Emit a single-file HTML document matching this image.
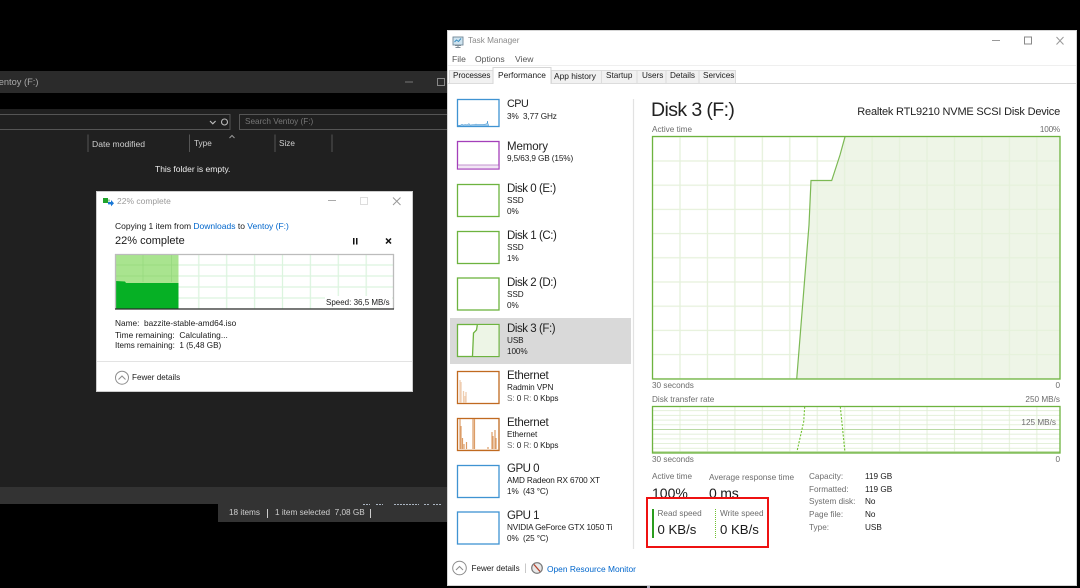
<!DOCTYPE html>
<html><head><meta charset="utf-8"><title>Task Manager</title>
<style>
html,body{margin:0;padding:0;background:#000;width:1080px;height:588px;overflow:hidden}
body{position:relative;font-family:"Liberation Sans",sans-serif;font-size:8.2px;color:#1a1a1a}
.a{position:absolute}
.t{position:absolute;white-space:nowrap;line-height:12px}
svg{position:absolute;left:0;top:0}
.g{color:#6d6d6d}
.d{color:#cfcfcf}
.b{color:#0066cc}
.h{font-size:11.5px;line-height:14px;color:#222;letter-spacing:-.2px}
.s{font-size:8.2px;letter-spacing:-.1px;left:507px}
.l{font-size:8.2px}
.tab{font-size:8.2px;top:70px}
</style></head><body>
<svg width="1080" height="588" viewBox="0 0 1080 588">
<defs>
<pattern id="g1" patternUnits="userSpaceOnUse" x="679" y="160" width="27.45" height="24.2"><path d="M1 0V24.2M0 1H27.45" fill="none" stroke="#e5f1db" stroke-width="1.3"/></pattern>
<pattern id="g2" patternUnits="userSpaceOnUse" x="679" y="409.700" width="27.45" height="4.7"><path d="M1 0V4.7" fill="none" stroke="#e8f2df" stroke-width="1.200"/><path d="M0 1H27.45" fill="none" stroke="#deedd2" stroke-width=".9"/></pattern>
<pattern id="g3" patternUnits="userSpaceOnUse" x="142" y="264" width="27.9" height="11"><path d="M1 0V11M0 1H27.9" fill="none" stroke="#dcf4df" stroke-width="1.3"/></pattern>
</defs>
<!-- explorer -->
<rect x="0" y="71" width="447" height="22" fill="#2b2b2b"/>
<rect x="0" y="93" width="447" height="16" fill="#000"/>
<rect x="0" y="109" width="447" height="379" fill="#202020"/>
<rect x="0" y="487" width="447" height="17" fill="#333"/>
<rect x="218" y="504" width="229" height="18" fill="#333"/>
<path d="M405 82H413" stroke="#777" stroke-width="1"/>
<rect x="437.500" y="78.500" width="7" height="7" fill="none" stroke="#888"/>
<path d="M0 114.500H230V129.500H0M447 114.500H239.500V129.500H447" fill="none" stroke="#555"/>
<path d="M210 121l2.800 2.800 2.800-2.800" fill="none" stroke="#bbb" stroke-width="1.200"/>
<circle cx="224.500" cy="122" r="3" fill="none" stroke="#bbb" stroke-width="1.100"/>
<path d="M88 134.500V152M189.500 134.500V152M275 134.500V152M332 134.500V152" stroke="#555"/>
<path d="M229.500 138l2.500-2.500 2.500 2.500" fill="none" stroke="#999"/>
<path d="M267.500 509v9M370.500 509v9" stroke="#ccc"/>
<path d="M363 504.500H370M376 504.500H383M394 504.500H419M424 504.500H430M433 504.500H441" stroke="#aab4c0" stroke-width="1" stroke-dasharray="2 1"/>
<!-- copy dialog -->
<rect x="96" y="191" width="317" height="201" fill="#fff"/>
<rect x="96.500" y="191.500" width="316" height="200" fill="none" stroke="#9a9a9a" stroke-opacity=".5"/>
<rect x="103" y="198" width="5" height="5" fill="#1fa32a"/><rect x="108" y="199.500" width="2" height="2" fill="#9ccf9e"/>
<path d="M108 202h3v-2l3 3.200-3 3.200v-2h-3z" fill="#1a78d6"/>
<path d="M328 200.500H336" stroke="#aaa"/>
<rect x="360.500" y="197.500" width="7" height="7" fill="none" stroke="#ddd"/>
<path d="M393 197.500L400.500 205M400.500 197.500L393 205" stroke="#999" stroke-width="1"/>
<rect x="353" y="238" width="1.500" height="6.500" fill="#111"/><rect x="356" y="238" width="1.500" height="6.500" fill="#111"/>
<path d="M386 238.500L391 243.500M391 238.500L386 243.500" stroke="#111" stroke-width="1.500"/>
<rect x="115" y="254" width="279" height="55" fill="url(#g3)"/>
<rect x="115.500" y="254" width="63" height="55" fill="#a9e48f"/>
<path d="M143 254V282M171.500 254V282M115.500 265H178M115.500 276H178" stroke="#97d97f" stroke-width=".8"/>
<path d="M116 281L125 281.500L126 283L178.500 283V308.500H116z" fill="#06b025"/>
<rect x="325" y="296" width="67" height="12" fill="#fff"/>
<path d="M115 254.500H394M115.500 254V309M393.500 254V309" stroke="#bcbcbc" stroke-width="1.300" fill="none"/>
<path d="M115 309H394" stroke="#2a2a2a" stroke-width="1.200"/>
<path d="M97 361.500H412" stroke="#e3e3e3"/>
<circle cx="122" cy="377.700" r="6.500" fill="none" stroke="#8c8c8c"/>
<path d="M118.500 379.500L122 376L125.500 379.500" fill="none" stroke="#8c8c8c"/>
<!-- task manager -->
<rect x="447" y="30" width="630" height="556" fill="#fff"/>
<rect x="447.500" y="30.500" width="629" height="555" fill="none" stroke="#d5d5d5"/>
<path d="M448 65.500H1076" stroke="#efefef"/>
<rect x="453" y="37" width="10" height="8" fill="#cfe3ef" stroke="#6f8796" stroke-width=".9"/>
<path d="M454.500 42l2-2 2 1.500 2.500-3" fill="none" stroke="#3a8fc2"/>
<path d="M455 45.500H461M458 45V47.500M455.500 47.500H460.500" stroke="#7e8b94"/>
<path d="M992 40.500H1000" stroke="#999"/>
<rect x="1024.500" y="37" width="7" height="7" fill="none" stroke="#888"/>
<path d="M1056.500 37L1063.500 44.500M1063.500 37L1056.500 44.500" stroke="#999"/>
<!-- tabs -->
<path d="M448 83.500H1076" stroke="#d9d9d9"/>
<rect x="449.500" y="70.500" width="43.500" height="13" fill="#f1f1f1" stroke="#dcdcdc"/>
<rect x="551.500" y="70.500" width="50" height="13" fill="#f1f1f1" stroke="#dcdcdc"/>
<rect x="601.500" y="70.500" width="35.500" height="13" fill="#f1f1f1" stroke="#dcdcdc"/>
<rect x="637" y="70.500" width="29" height="13" fill="#f1f1f1" stroke="#dcdcdc"/>
<rect x="666" y="70.500" width="33" height="13" fill="#f1f1f1" stroke="#dcdcdc"/>
<rect x="699" y="70.500" width="36.500" height="13" fill="#f1f1f1" stroke="#dcdcdc"/>
<path d="M493 84V67.500H551V84" fill="#fff" stroke="#d6d6d6"/>
<rect x="493.500" y="82" width="57" height="3" fill="#fff"/>
<!-- sidebar -->
<rect x="450" y="318" width="181" height="46" fill="#d9d9d9"/>
<path d="M633.500 99V549" stroke="#e2e2e2" stroke-width="1.200"/>
<g fill="#fff" stroke-width="1.300">
<rect x="457.500" y="99.500" width="41.500" height="27" fill="#fff" stroke="#3f93d2"/>
<path d="M458 125.500l3-.5 1-1 1 1 3-.5 1 .5 2-1.500 1 1.500 5-.5 1-.5 1 .5 6 0 3-.5 1-.5.500-2.500.500 3 .5.500V126H458z" fill="#a9cfeb" stroke="#3f93d2" stroke-width=".5"/>
<rect x="457.500" y="141.500" width="41.500" height="27.500" fill="#fff" stroke="#a33fba"/>
<rect x="458" y="165.500" width="40.500" height="3" fill="#f1e6f4"/><path d="M458 165H498.500" stroke="#b06fc1" stroke-width=".8"/>
<rect x="457.500" y="184.500" width="41.500" height="32" stroke="#6db33f"/>
<rect x="457.500" y="231.500" width="41.500" height="32" stroke="#6db33f"/>
<rect x="457.500" y="278" width="41.500" height="32" stroke="#6db33f"/>
<rect x="457.500" y="324.500" width="41.500" height="32" stroke="#6db33f"/>
<path d="M472.500 356L473.500 333L476.500 330L477.300 325H498.500V356z" fill="#edf5e6" stroke="none"/>
<path d="M472.500 356L473.500 333L476.500 330L477.300 325" fill="none" stroke="#6db33f"/>
<rect x="457.500" y="371.500" width="41.500" height="32" stroke="#c06a20"/>
<path d="M460 403V380M461 403V382M463.500 403V391M466 403V392M465 403V396" stroke="#efcdb0" stroke-width="1.300" fill="none"/>
<rect x="457.500" y="418.500" width="41.500" height="32" stroke="#c06a20"/>
<path d="M460 450V419M461 450V426M462.500 450V438M464 450V444M466.500 450V442M473 450V419M474.500 450V419M488 450V447M492 450V432M493 450V436M495 450V430M496 450V438" stroke="#dc9c66" stroke-width="1.200" fill="none"/>
<path d="M458 449.500H498" stroke="#efd4bc" stroke-width="1"/>
<rect x="457.500" y="465.500" width="41.500" height="32" stroke="#3f93d2"/>
<rect x="457.500" y="512" width="41.500" height="32" stroke="#3f93d2"/>
</g>
<!-- active-time graph -->
<rect x="652.500" y="136.500" width="407.500" height="242.500" fill="#fff"/>
<path d="M796.700 379L809 225L811 180.500H831.700L840 155L845 136.800H1060V379z" fill="#eef5e7"/>
<rect x="652.500" y="136.500" width="407.500" height="242.500" fill="url(#g1)"/>
<path d="M796.700 379L809 225L811 180.500H831.700L840 155L845 136.800" fill="none" stroke="#7cb954" stroke-width="1.200"/>
<rect x="652.500" y="136.500" width="407.500" height="242.500" fill="none" stroke="#6db33f" stroke-width="1.300"/>
<!-- transfer graph -->
<rect x="652.500" y="406.500" width="407.500" height="46.500" fill="url(#g2)"/>
<path d="M653 429.500H1060" stroke="#b9d9a4"/>
<path d="M804.700 406.700L803.700 421.700L796.700 452.700M840.300 406.700L845 452.700" fill="none" stroke="#6fc12f" stroke-width="1.100" stroke-dasharray="2 1.500"/>
<path d="M653 452H1060" stroke="#b5d99b" stroke-width="1.500"/>
<rect x="652.500" y="406.500" width="407.500" height="46.500" fill="none" stroke="#6db33f" stroke-width="1.300"/>
<!-- bottom footer -->
<circle cx="459.500" cy="568" r="6.800" fill="none" stroke="#8c8c8c"/>
<path d="M456 570L459.500 566.500L463 570" fill="none" stroke="#8c8c8c"/>
<path d="M525.500 563.500V573" stroke="#c8c8c8"/>
<circle cx="537" cy="568" r="5.300" fill="#e8e8e8" stroke="#777" stroke-width="1.200"/>
<path d="M534 564.500L540 571.500" stroke="#b5402a" stroke-width="1.300"/>
<rect x="647" y="586" width="3" height="2" fill="#aab"/>
</svg>

<!-- explorer text -->
<div class="t" style="left:-7px;top:76px;color:#aaa;font-size:9.300px">Ventoy (F:)</div>
<div class="t" style="left:245px;top:116px;color:#777;font-size:8.200px">Search Ventoy (F:)</div>
<div class="t d" style="left:92px;top:137.500px;font-size:8.600px">Date modified</div>
<div class="t d" style="left:194px;top:137.500px;font-size:8.200px">Type</div>
<div class="t d" style="left:279px;top:137.500px;font-size:8.200px">Size</div>
<div class="t" style="left:155px;top:162.500px;color:#eee;font-size:8.500px">This folder is empty.</div>
<div class="t d" style="left:229px;top:507px;font-size:8.200px">18 items</div>
<div class="t d" style="left:275px;top:507px;font-size:8.200px">1 item selected&nbsp; 7,08 GB</div>

<!-- copy dialog text -->
<div class="t" style="left:117px;top:195px;color:#9a9a9a;font-size:8.500px">22% complete</div>
<div class="t" style="left:115px;top:220px;font-size:8.500px">Copying 1 item from <span class="b">Downloads</span> to <span class="b">Ventoy (F:)</span></div>
<div class="t" style="left:115px;top:234px;font-size:11px;line-height:14px">22% complete</div>
<div class="t" style="left:326px;top:296.500px;font-size:8px">Speed: 36,5 MB/s</div>
<div class="t" style="left:115px;top:317px;font-size:8.300px">Name:&nbsp; bazzite-stable-amd64.iso</div>
<div class="t" style="left:115px;top:328.500px;font-size:8.400px">Time remaining:&nbsp; Calculating...</div>
<div class="t" style="left:115px;top:340px;font-size:8.100px">Items remaining:&nbsp; 1 (5,48 GB)</div>
<div class="t" style="left:132px;top:372px;font-size:8.100px">Fewer details</div>

<!-- task manager chrome text -->
<div class="t" style="left:468px;top:35px;color:#8a8a8a;font-size:8.200px">Task Manager</div>
<div class="t" style="left:452px;top:52.500px;color:#555;font-size:8.600px">File</div>
<div class="t" style="left:475px;top:52.500px;color:#555;font-size:8.600px">Options</div>
<div class="t" style="left:515px;top:52.500px;color:#555;font-size:8.600px">View</div>
<div class="t tab" style="left:453px;letter-spacing:-.1px">Processes</div>
<div class="t tab" style="left:498px;top:69px;font-size:8.400px">Performance</div>
<div class="t tab" style="left:554px;font-size:8.400px">App history</div>
<div class="t tab" style="left:606px;">Startup</div>
<div class="t tab" style="left:642px;">Users</div>
<div class="t tab" style="left:670px;">Details</div>
<div class="t tab" style="left:703px;">Services</div>

<!-- sidebar text -->
<div class="t h" style="left:507px;top:97px;font-size:10.800px;letter-spacing:-.5px">CPU</div>
<div class="t s" style="top:111px">3%&nbsp; 3,77 GHz</div>
<div class="t h" style="left:507px;top:139.500px;letter-spacing:-.1px">Memory</div>
<div class="t s" style="top:152.500px">9,5/63,9 GB (15%)</div>
<div class="t h" style="left:507px;top:182px;letter-spacing:-.45px">Disk 0 (E:)</div>
<div class="t s" style="top:195px">SSD</div>
<div class="t s" style="top:206px">0%</div>
<div class="t h" style="left:507px;top:229px;letter-spacing:-.45px">Disk 1 (C:)</div>
<div class="t s" style="top:242px">SSD</div>
<div class="t s" style="top:253px">1%</div>
<div class="t h" style="left:507px;top:275.500px;letter-spacing:-.45px">Disk 2 (D:)</div>
<div class="t s" style="top:288.500px">SSD</div>
<div class="t s" style="top:299.500px">0%</div>
<div class="t h" style="left:507px;top:322px;letter-spacing:-.45px">Disk 3 (F:)</div>
<div class="t s" style="top:335px">USB</div>
<div class="t s" style="top:346px">100%</div>
<div class="t h" style="left:507px;top:369px;letter-spacing:-.25px">Ethernet</div>
<div class="t s" style="top:382px">Radmin VPN</div>
<div class="t s" style="top:393px"><span class="g">S:</span> 0 <span class="g">R:</span> 0 Kbps</div>
<div class="t h" style="left:507px;top:415.500px;letter-spacing:-.25px">Ethernet</div>
<div class="t s" style="top:428.500px">Ethernet</div>
<div class="t s" style="top:439.500px"><span class="g">S:</span> 0 <span class="g">R:</span> 0 Kbps</div>
<div class="t h" style="left:507px;top:462px;letter-spacing:-.5px">GPU 0</div>
<div class="t s" style="top:475px;letter-spacing:-.15px">AMD Radeon RX 6700 XT</div>
<div class="t s" style="top:486px">1%&nbsp; (43 °C)</div>
<div class="t h" style="left:507px;top:509px;letter-spacing:-.5px">GPU 1</div>
<div class="t s" style="top:522px;letter-spacing:-.15px">NVIDIA GeForce GTX 1050 Ti</div>
<div class="t s" style="top:533px">0%&nbsp; (25 °C)</div>

<!-- main text -->
<div class="t" style="left:651px;top:98px;font-size:19.500px;line-height:24px;color:#222;letter-spacing:-.6px">Disk 3 (F:)</div>
<div class="t" style="right:20px;top:105px;font-size:11px;line-height:14px;color:#222;letter-spacing:-.2px">Realtek RTL9210 NVME SCSI Disk Device</div>
<div class="t g l" style="left:652px;top:124px">Active time</div>
<div class="t g l" style="right:20px;top:124px;letter-spacing:-.2px">100%</div>
<div class="t g l" style="left:652px;top:380px">30 seconds</div>
<div class="t g l" style="right:20px;top:380px">0</div>
<div class="t g l" style="left:652px;top:394px">Disk transfer rate</div>
<div class="t g l" style="right:20px;top:394px">250 MB/s</div>
<div class="t g l" style="right:24px;top:417px">125 MB/s</div>
<div class="t g l" style="left:652px;top:454px">30 seconds</div>
<div class="t g l" style="right:20px;top:454px">0</div>
<div class="t g l" style="left:652px;top:471px">Active time</div>
<div class="t g l" style="left:709px;top:471px;font-size:8.300px">Average response time</div>
<div class="t" style="left:652px;top:484px;font-size:14px;line-height:18px">100%</div>
<div class="t" style="left:709px;top:484px;font-size:14px;line-height:18px;letter-spacing:-.2px">0 ms</div>
<div class="t g l" style="left:809px;top:471px">Capacity:</div>
<div class="t l" style="left:865px;top:471px">119 GB</div>
<div class="t g l" style="left:809px;top:483.500px">Formatted:</div>
<div class="t l" style="left:865px;top:483.500px">119 GB</div>
<div class="t g l" style="left:809px;top:496px">System disk:</div>
<div class="t l" style="left:865px;top:496px">No</div>
<div class="t g l" style="left:809px;top:509px">Page file:</div>
<div class="t l" style="left:865px;top:509px">No</div>
<div class="t g l" style="left:809px;top:522px">Type:</div>
<div class="t l" style="left:865px;top:522px">USB</div>

<!-- red box -->
<div class="a" style="left:646px;top:497px;width:119px;height:47px;background:#fff;border:2px solid #ee1111"></div>
<div class="a" style="left:652px;top:509px;width:1.500px;height:29px;background:#2a9d1e"></div>
<div class="a" style="left:714.500px;top:509px;width:0;height:29px;border-left:1.500px dotted #6fc12f"></div>
<div class="t g l" style="left:657.500px;top:507.500px">Read speed</div>
<div class="t g l" style="left:720px;top:507.500px">Write speed</div>
<div class="t" style="left:657.500px;top:520.500px;font-size:13.200px;line-height:18px">0 KB/s</div>
<div class="t" style="left:720px;top:520.500px;font-size:13.200px;line-height:18px">0 KB/s</div>

<!-- footer -->
<div class="t" style="left:471.500px;top:562.500px;font-size:8.100px">Fewer details</div>
<div class="t b" style="left:547px;top:562.500px;font-size:8.400px">Open Resource Monitor</div>
</body></html>
